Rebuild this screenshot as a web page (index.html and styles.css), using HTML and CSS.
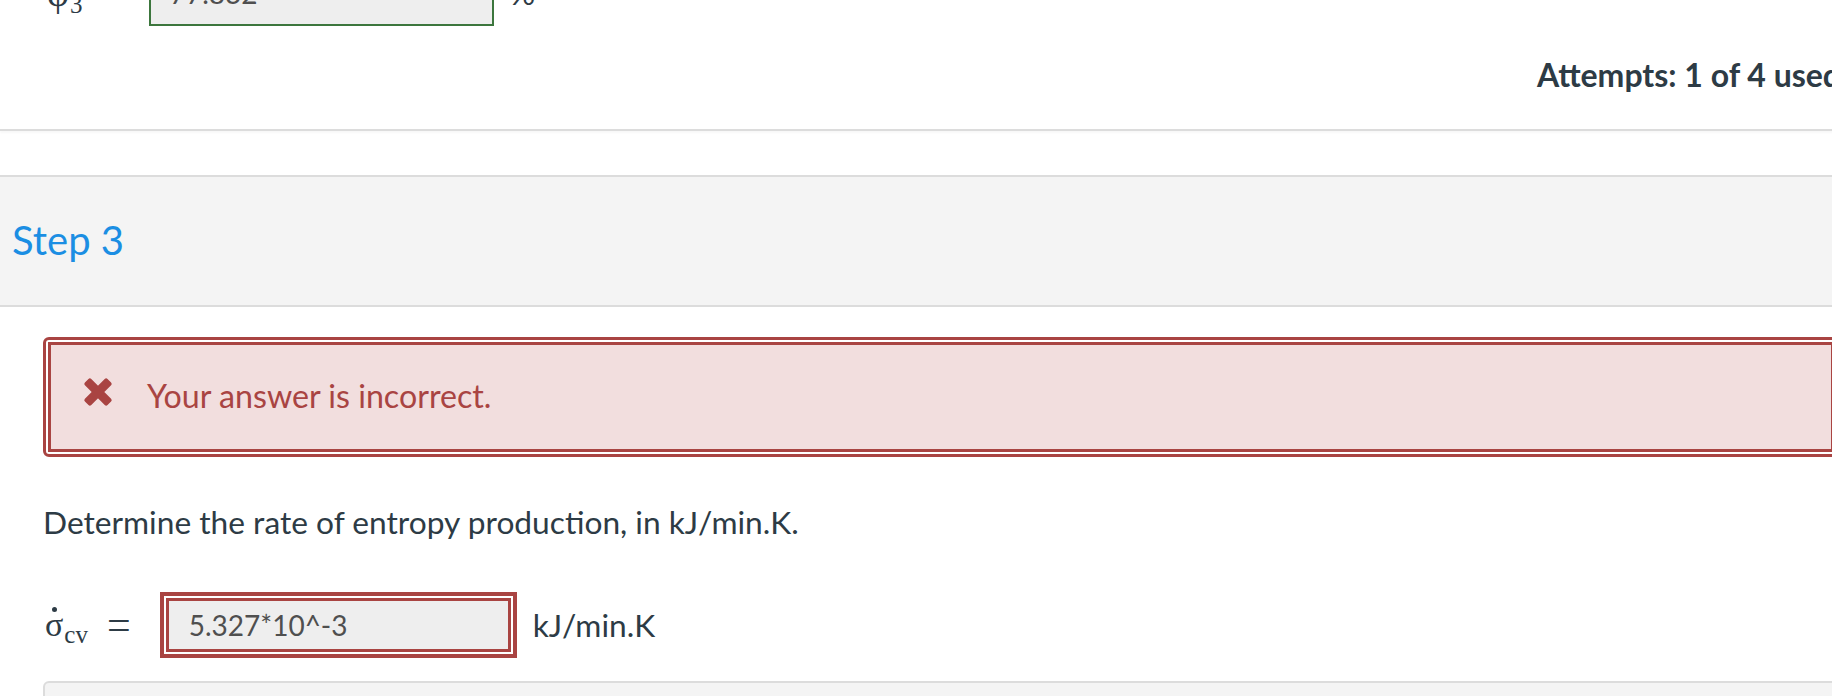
FILE: index.html
```html
<!DOCTYPE html>
<html lang="en">
<head>
<meta charset="utf-8">
<title>Step 3</title>
<link rel="stylesheet" href="styles.css">
</head>
<body>
<div class="page">
  <section class="prev">
    <div class="answer-row">
      <span class="math math-phi"><span class="sym">φ</span><sub class="sub">3</sub></span>
      <span class="eq">=</span>
      <div class="input input-correct">77.832</div>
      <span class="unit">%</span>
    </div>
    <div class="attempts">Attempts: 1 of 4 used</div>
  </section>

  <header class="step-head">
    <h2 class="step-title">Step 3</h2>
  </header>

  <section class="step-body">
    <div class="alert">
      <div class="alert-inner">
        <svg class="alert-icon" viewBox="0 0 30 30" width="30" height="30" aria-hidden="true">
          <rect x="-1" y="10.5" width="32" height="9" rx="2" transform="rotate(45 15 15)"></rect>
          <rect x="-1" y="10.5" width="32" height="9" rx="2" transform="rotate(-45 15 15)"></rect>
        </svg>
        <span class="alert-text">Your answer is incorrect.</span>
      </div>
    </div>

    <p class="question">Determine the rate of entropy production, in kJ/min.K.</p>

    <div class="answer-row">
      <span class="math math-sigma"><span class="sym dotted">σ</span><sub class="sub">cv</sub></span>
      <span class="eq">=</span>
      <div class="input-wrap">
        <div class="input input-wrong">5.327*10^-3</div>
      </div>
      <span class="unit">kJ/min.K</span>
    </div>

    <div class="hint-box"></div>
  </section>
</div>
</body>
</html>
```

FILE: styles.css
```css
html, body {
  margin: 0;
  padding: 0;
  background: #fff;
  overflow: hidden;
}

body {
  font-family: Lato, "Liberation Sans", sans-serif;
  color: #2d3b45;
}

.page {
  width: 1882px;
}

/* previous step (cut off at top) */
.prev {
  margin-top: -40px;
  padding: 0 43px 34px;
  border-bottom: 2px solid #dcdcdc;
  box-shadow: 0 2px 2px rgba(0, 0, 0, 0.03);
}

.answer-row {
  display: flex;
  align-items: center;
}

.math {
  font-family: "Liberation Serif", "DejaVu Serif", serif;
  font-size: 34px;
  color: #2d3b45;
  display: inline-flex;
  align-items: baseline;
  box-sizing: border-box;
}

.math-phi {
  width: 33px;
  padding-left: 4px;
  font-size: 38px;
}

.math-sigma {
  width: 44px;
  padding-left: 2px;
}

.sym {
  position: relative;
}

.dotted::before {
  content: "";
  position: absolute;
  left: 50%;
  top: 1px;
  width: 5px;
  height: 5px;
  margin-left: -2px;
  border-radius: 50%;
  background: #2d3b45;
}

.sub {
  font-size: 25px;
  vertical-align: baseline;
  position: relative;
  top: 7px;
  margin-left: 1px;
}

.eq {
  font-family: "Liberation Serif", "DejaVu Serif", serif;
  font-size: 42px;
  line-height: 1;
  margin: 0 29px 0 20px;
  color: #2d3b45;
}

.input {
  box-sizing: border-box;
  width: 345px;
  background: #eeeeee;
  font-size: 28px;
  color: #4f4f4f;
  display: flex;
  align-items: center;
}

.input-correct {
  height: 66px;
  border: 2px solid #3c763d;
  padding-left: 19px;
}

.input-wrap {
  border: 4px solid #a94442;
  padding: 2px;
  background: #fff;
}

.input-wrong {
  height: 54px;
  border: 3px solid #a94442;
  padding-left: 20px;
}

.unit {
  font-size: 31.7px;
  margin-left: 16px;
  color: #2d3b45;
}

.attempts {
  margin-top: 29px;
  margin-right: -2px;
  text-align: right;
  font-weight: 700;
  font-size: 32px;
  line-height: 1.24;
  color: #2d3b45;
}

/* step header */
.step-head {
  margin-top: 44px;
  border-top: 2px solid #dcdcdc;
  border-bottom: 2px solid #dcdcdc;
  background: #f4f4f4;
  padding: 39px 12px 41px;
}

.step-title {
  margin: 0;
  font-size: 40px;
  font-weight: 400;
  line-height: 1.2;
  color: #1b8ee3;
}

/* step body */
.step-body {
  padding: 30px 43px 0;
}

.alert {
  border: 3px solid #a94442;
  border-radius: 6px;
  padding: 2px;
  background: #fff;
}

.alert-inner {
  border: 3px solid #a94442;
  background: #f2dede;
  height: 104px;
  display: flex;
  align-items: center;
  padding-left: 32px;
}

.alert-icon {
  fill: #a94442;
  margin-right: 34px;
  margin-top: -10px;
  flex: none;
}

.alert-text {
  font-size: 32.2px;
  line-height: 1.2;
  color: #a94442;
}

.question {
  margin: 46px 0 51px;
  font-size: 31.7px;
  line-height: 1.2;
  color: #2d3b45;
}

.hint-box {
  margin-top: 23px;
  height: 100px;
  border: 2px solid #dcdcdc;
  border-radius: 6px;
  background: #f4f4f4;
}
```
